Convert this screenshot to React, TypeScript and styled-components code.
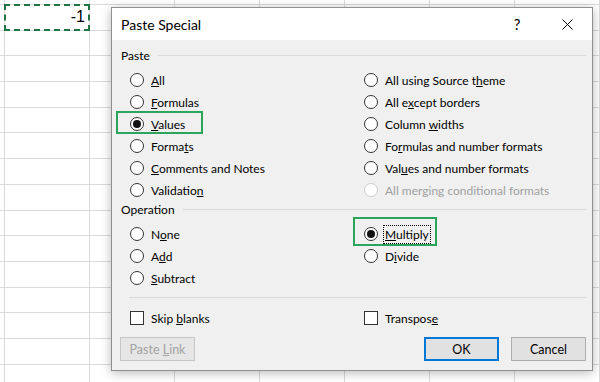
import React from "react";
import styled, { createGlobalStyle, css } from "styled-components";

const GlobalStyle = createGlobalStyle`
    html, body {
        margin: 0;
        padding: 0;
        width: 600px;
        height: 382px;
        overflow: hidden;
        background: #ffffff;
    }
`;

const UI_FONT = `Lato, "Noto Sans", sans-serif`;

// spreadsheet behind the dialog
const Sheet = styled.div`
    position: relative;
    width: 600px;
    height: 382px;
    overflow: hidden;
    display: grid;
    grid-template-columns: 5px repeat(7, 85px);
    grid-template-rows: 5px repeat(15, 25.7px);
    background: #ffffff;
`;

const Cell = styled.div<{ $copied?: boolean }>`
    position: relative;
    box-sizing: border-box;
    border-right: 1px solid #dadada;
    border-bottom: 1px solid #dadada;
    display: flex;
    align-items: center;
    justify-content: flex-end;
    padding-right: 4px;
    font-family: "Liberation Sans", Arial, sans-serif;
    font-size: 16px;
    color: #000;

    ${(p) =>
        p.$copied &&
        css`
            &::after {
                content: "";
                position: absolute;
                inset: -1px -1px -1px -1px;
                border: 2px dashed #217346;
            }
        `}
`;

// the dialog window
const Dialog = styled.div`
    position: absolute;
    left: 111px;
    top: 7px;
    width: 482px;
    height: 364px;
    box-sizing: border-box;
    border: 1px solid #8f8f8f;
    box-shadow: 0 2px 10px rgba(0, 0, 0, 0.28);
    background: #f0f0f0;
    display: flex;
    flex-direction: column;
    font-family: ${UI_FONT};
    color: #000;
`;

const TitleBar = styled.div`
    height: 32px;
    background: #ffffff;
    display: flex;
    align-items: center;
    padding: 0 0 0 9px;
`;

const Title = styled.div`
    flex: 1;
    font-size: 14px;
    padding-top: 1px;
`;

const TitleButton = styled.div`
    width: 50px;
    height: 32px;
    display: flex;
    align-items: center;
    justify-content: center;
    font-size: 15px;
`;

const Body = styled.div`
    flex: 1;
    display: flex;
    flex-direction: column;
    padding: 7px 6px 9px 8px;
`;

const GroupHeader = styled.div`
    height: 16px;
    display: flex;
    align-items: center;
    gap: 8px;
    padding-left: 1px;
    font-size: 12px;

    &::after {
        content: "";
        flex: 1;
        height: 1px;
        background: #dcdcdc;
    }
`;

const OptionGrid = styled.div<{ $top: number }>`
    display: grid;
    grid-template-columns: 234px 1fr;
    grid-auto-rows: 22px;
    padding-left: 10px;
    margin-top: ${(p) => p.$top}px;
`;

const Option = styled.div<{ $disabled?: boolean }>`
    position: relative;
    justify-self: start;
    display: flex;
    align-items: center;
    gap: 7px;
    height: 22px;
    font-size: 12px;
    color: ${(p) => (p.$disabled ? "#a0a0a0" : "#000")};
`;

const Highlight = styled.span`
    position: absolute;
    box-sizing: border-box;
    border: 2px solid #2ba55c;
    pointer-events: none;
`;

const Radio = styled.span<{ $checked?: boolean; $disabled?: boolean }>`
    width: 14px;
    height: 14px;
    box-sizing: border-box;
    border-radius: 50%;
    border: 1px solid ${(p) => (p.$disabled ? "#cccccc" : "#333333")};
    background: #ffffff;
    display: flex;
    align-items: center;
    justify-content: center;

    &::after {
        content: "";
        width: 8px;
        height: 8px;
        border-radius: 50%;
        background: ${(p) => (p.$checked ? "#111111" : "transparent")};
    }
`;

const CheckBox = styled.span`
    width: 14px;
    height: 14px;
    box-sizing: border-box;
    border: 1px solid #333333;
    background: #ffffff;
`;

const FocusText = styled.span<{ $focus?: boolean }>`
    padding: 1px 1px;
    border: 1px dotted ${(p) => (p.$focus ? "#000" : "transparent")};
    margin: 0 -2px;
`;

const Separator = styled.div`
    height: 1px;
    background: #dcdcdc;
    margin: 8px 0 9px 9px;
`;

const ButtonRow = styled.div`
    display: flex;
    align-items: center;
    margin-top: 8px;
    gap: 12px;
`;

const Button = styled.div<{ $variant?: "default" | "disabled" }>`
    width: 75px;
    height: 24px;
    box-sizing: border-box;
    display: flex;
    align-items: center;
    justify-content: center;
    font-size: 12.5px;
    background: #e1e1e1;
    border: 1px solid #adadad;
    color: #000;

    ${(p) =>
        p.$variant === "default" &&
        css`
            border: 2px solid #0078d7;
        `}

    ${(p) =>
        p.$variant === "disabled" &&
        css`
            background: #e6e6e6;
            border-color: #c6c6c6;
            color: #a3a3a3;
        `}
`;

const Spacer = styled.div`
    flex: 1;
`;

// "&" marks the access key letter
function Accel({ text }: { text: string }) {
    const i = text.indexOf("&");
    if (i < 0) return <span>{text}</span>;
    return (
        <span>
            {text.slice(0, i)}
            <u>{text[i + 1]}</u>
            {text.slice(i + 2)}
        </span>
    );
}

type Opt = {
    label: string;
    checked?: boolean;
    disabled?: boolean;
    focus?: boolean;
    hl?: { x: number; y: number; w: number; h: number };
} | null;

const pasteOptions: Opt[] = [
    { label: "&All" },
    { label: "All using Source t&heme" },
    { label: "&Formulas" },
    { label: "All e&xcept borders" },
    { label: "&Values", checked: true, hl: { x: -14, y: -2, w: 87, h: 23 } },
    { label: "Column &widths" },
    { label: "Forma&ts" },
    { label: "Fo&rmulas and number formats" },
    { label: "&Comments and Notes" },
    { label: "Val&ues and number formats" },
    { label: "Validatio&n" },
    { label: "All merging conditional formats", disabled: true },
];

const operationOptions: Opt[] = [
    { label: "N&one" },
    { label: "&Multiply", checked: true, focus: true, hl: { x: -11, y: -6, w: 84, h: 29 } },
    { label: "A&dd" },
    { label: "D&ivide" },
    { label: "&Subtract" },
    null,
];

function RadioOption({ opt }: { opt: Opt }) {
    if (!opt) return <div />;
    return (
        <Option $disabled={opt.disabled}>
            <Radio $checked={opt.checked} $disabled={opt.disabled} />
            <FocusText $focus={opt.focus}>
                <Accel text={opt.label} />
            </FocusText>
            {opt.hl && (
                <Highlight
                    style={{ left: opt.hl.x, top: opt.hl.y, width: opt.hl.w, height: opt.hl.h }}
                />
            )}
        </Option>
    );
}

function CloseIcon() {
    return (
        <svg width="11" height="11" viewBox="0 0 11 11">
            <path d="M0.5 0.5 L10.5 10.5 M10.5 0.5 L0.5 10.5" stroke="#000" strokeWidth="1" />
        </svg>
    );
}

export default function App() {
    const cells = [];
    for (let r = 0; r < 16; r++) {
        for (let c = 0; c < 8; c++) {
            const copied = r === 1 && c === 1;
            cells.push(
                <Cell key={`${r}-${c}`} $copied={copied}>
                    {copied ? "-1" : null}
                </Cell>
            );
        }
    }

    return (
        <>
            <GlobalStyle />
            <Sheet>
                {cells}

                <Dialog>
                    <TitleBar>
                        <Title>Paste Special</Title>
                        <TitleButton>?</TitleButton>
                        <TitleButton>
                            <CloseIcon />
                        </TitleButton>
                    </TitleBar>

                    <Body>
                        <GroupHeader>Paste</GroupHeader>
                        <OptionGrid $top={6}>
                            {pasteOptions.map((o, i) => (
                                <RadioOption key={i} opt={o} />
                            ))}
                        </OptionGrid>

                        <GroupHeader>Operation</GroupHeader>
                        <OptionGrid $top={6}>
                            {operationOptions.map((o, i) => (
                                <RadioOption key={i} opt={o} />
                            ))}
                        </OptionGrid>

                        <Separator />

                        <OptionGrid $top={0}>
                            <Option>
                                <CheckBox />
                                <Accel text="Skip &blanks" />
                            </Option>
                            <Option>
                                <CheckBox />
                                <Accel text="Transpos&e" />
                            </Option>
                        </OptionGrid>

                        <ButtonRow>
                            <Button $variant="disabled">
                                <Accel text="Paste &Link" />
                            </Button>
                            <Spacer />
                            <Button $variant="default">OK</Button>
                            <Button>Cancel</Button>
                        </ButtonRow>
                    </Body>
                </Dialog>
            </Sheet>
        </>
    );
}
